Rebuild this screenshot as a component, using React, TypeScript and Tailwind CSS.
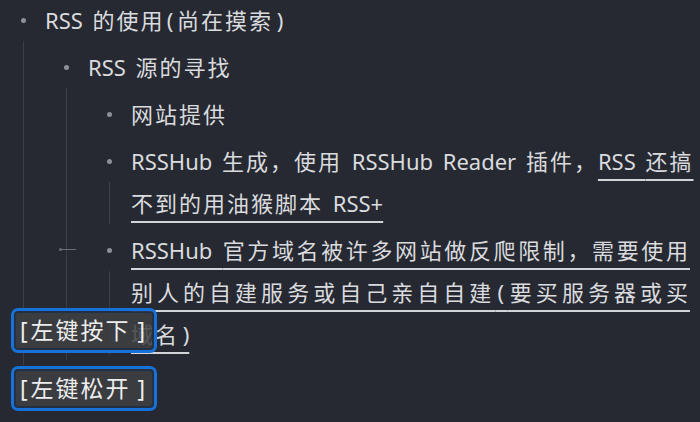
import React from 'react';

const SPLIT = /([\u3000-\u9fff\uff00-\uffef]+)/;
const CJK = /^[\u3000-\u9fff\uff00-\uffef]+$/;

// CJK runs get a little extra tracking, parens get thin spaces around them
const T: React.FC<{ s: string }> = ({ s }) => (
  <>
    {s
      .replace(/\(/g, '\u200a(\u2009')
      .replace(/\)/g, '\u2009)')
      .split(SPLIT)
      .map((p, i) =>
        !p ? null : CJK.test(p) ? (
          <span key={i} className="tracking-[2px]">
            {p}
          </span>
        ) : (
          <React.Fragment key={i}>{p}</React.Fragment>
        )
      )}
  </>
);

const U: React.FC<{ s: string }> = ({ s }) => (
  <span className="underline decoration-[#d3d4d8] decoration-[1.5px] underline-offset-[9px]">
    <T s={s} />
  </span>
);

// wrapped lines are justified to the column edge, the last one is not
const Line: React.FC<{ children: React.ReactNode; full?: boolean }> = ({ children, full }) => (
  <div
    className={
      full
        ? 'h-[42px] whitespace-nowrap text-justify leading-[42px] [text-align-last:justify] [word-spacing:4px]'
        : 'h-[42px] whitespace-nowrap leading-[42px] [word-spacing:4px]'
    }
  >
    {children}
  </div>
);

const Item: React.FC<{ lines: React.ReactNode; children?: React.ReactNode }> = ({ lines, children }) => (
  <div className="flex pb-[5px]">
    <div className="flex w-[43px] shrink-0 flex-col items-center">
      <div className="flex h-[42px] items-center">
        <span className="block h-[5px] w-[5px] rounded-full bg-[#8d9096]" />
      </div>
      <div className="w-px flex-1 bg-[#3b3e47]" />
    </div>
    <div className="min-w-0 flex-1">
      {lines}
      {children && <div className="pt-[5px]">{children}</div>}
    </div>
  </div>
);

const Badge: React.FC<{ label: string; className: string }> = ({ label, className }) => (
  <div
    className={`absolute flex h-[45px] w-[146px] items-center rounded-[7px] border-[3px] border-[#1672d8] bg-[#3e3f43]/85 pl-[6px] text-[23px] text-[#ededee] shadow-[inset_0_0_0_2px_rgba(20,40,70,0.6)] ${className}`}
  >
    <span>[</span>
    <span className="ml-[3px] tracking-[2px]">{label}</span>
    <span className="ml-[7px]">]</span>
  </div>
);

export default function App() {
  return (
    <div
      className="relative h-[422px] w-[700px] overflow-hidden bg-[#262932] pr-[10px] text-[22px] text-[#dadbde]"
      style={{ fontFamily: '"Noto Sans", "Noto Sans CJK SC", sans-serif' }}
    >
      <div className="mt-[-1px] pl-[2px]">
        <Item
          lines={
            <Line>
              <T s="RSS 的使用(尚在摸索)" />
            </Line>
          }
        >
          <Item
            lines={
              <Line>
                <T s="RSS 源的寻找" />
              </Line>
            }
          >
            <Item
              lines={
                <Line>
                  <T s="网站提供" />
                </Line>
              }
            />
            <Item
              lines={
                <>
                  <Line full>
                    <T s="RSSHub 生成，使用 RSSHub Reader 插件，" />
                    <U s="RSS 还搞" />
                  </Line>
                  <Line>
                    <U s="不到的用油猴脚本 RSS+" />
                  </Line>
                </>
              }
            />
            <Item
              lines={
                <>
                  <Line full>
                    <U s="RSSHub 官方域名被许多网站做反爬限制，需要使用" />
                  </Line>
                  <Line full>
                    <U s="别人的自建服务或自己亲自自建(要买服务器或买" />
                  </Line>
                  <Line>
                    <U s="域名)" />
                  </Line>
                </>
              }
            />
          </Item>
        </Item>
      </div>

      {/* hover handle beside the last item */}
      <div className="absolute left-[59px] top-[248px] flex items-center">
        <span className="block h-[3px] w-[3px] rounded-full bg-[#6c6f77]" />
        <span className="block h-px w-[14px] bg-[#6c6f77]" />
      </div>

      <Badge label="左键按下" className="left-[11px] top-[308px]" />
      <Badge label="左键松开" className="left-[11px] top-[366px]" />
    </div>
  );
}
